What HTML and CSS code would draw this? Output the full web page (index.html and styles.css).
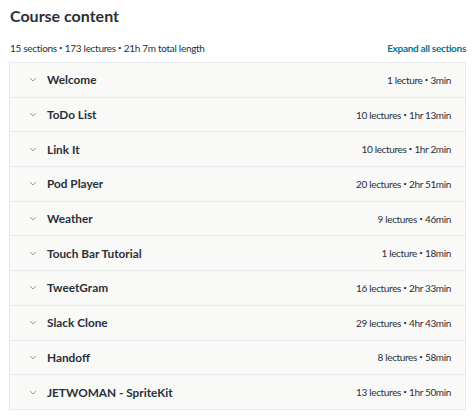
FILE: index.html
```html
<!DOCTYPE html>
<html>
<head>
<meta charset="utf-8">
<link rel="stylesheet" href="styles.css">
</head>
<body>
<div class="page">
  <h2 class="title">Course content</h2>
  <div class="meta">
    <span class="stats">15 sections <span class="dot">•</span> 173 lectures <span class="dot">•</span> 21h 7m total length</span>
    <span class="expand">Expand all sections</span>
  </div>
  <div class="list">
    <div class="row"><span class="chev"><svg width="8" height="5" viewBox="0 0 8 5"><path d="M1 1 L4 4 L7 1" fill="none" stroke="#9a9da1" stroke-width="1"/></svg></span><span class="name">Welcome</span><span class="info">1 lecture <span class="dot">•</span> 3min</span></div>
    <div class="row"><span class="chev"><svg width="8" height="5" viewBox="0 0 8 5"><path d="M1 1 L4 4 L7 1" fill="none" stroke="#9a9da1" stroke-width="1"/></svg></span><span class="name">ToDo List</span><span class="info">10 lectures <span class="dot">•</span> 1hr 13min</span></div>
    <div class="row"><span class="chev"><svg width="8" height="5" viewBox="0 0 8 5"><path d="M1 1 L4 4 L7 1" fill="none" stroke="#9a9da1" stroke-width="1"/></svg></span><span class="name">Link It</span><span class="info">10 lectures <span class="dot">•</span> 1hr 2min</span></div>
    <div class="row"><span class="chev"><svg width="8" height="5" viewBox="0 0 8 5"><path d="M1 1 L4 4 L7 1" fill="none" stroke="#9a9da1" stroke-width="1"/></svg></span><span class="name">Pod Player</span><span class="info">20 lectures <span class="dot">•</span> 2hr 51min</span></div>
    <div class="row"><span class="chev"><svg width="8" height="5" viewBox="0 0 8 5"><path d="M1 1 L4 4 L7 1" fill="none" stroke="#9a9da1" stroke-width="1"/></svg></span><span class="name">Weather</span><span class="info">9 lectures <span class="dot">•</span> 46min</span></div>
    <div class="row"><span class="chev"><svg width="8" height="5" viewBox="0 0 8 5"><path d="M1 1 L4 4 L7 1" fill="none" stroke="#9a9da1" stroke-width="1"/></svg></span><span class="name">Touch Bar Tutorial</span><span class="info">1 lecture <span class="dot">•</span> 18min</span></div>
    <div class="row"><span class="chev"><svg width="8" height="5" viewBox="0 0 8 5"><path d="M1 1 L4 4 L7 1" fill="none" stroke="#9a9da1" stroke-width="1"/></svg></span><span class="name">TweetGram</span><span class="info">16 lectures <span class="dot">•</span> 2hr 33min</span></div>
    <div class="row"><span class="chev"><svg width="8" height="5" viewBox="0 0 8 5"><path d="M1 1 L4 4 L7 1" fill="none" stroke="#9a9da1" stroke-width="1"/></svg></span><span class="name">Slack Clone</span><span class="info">29 lectures <span class="dot">•</span> 4hr 43min</span></div>
    <div class="row"><span class="chev"><svg width="8" height="5" viewBox="0 0 8 5"><path d="M1 1 L4 4 L7 1" fill="none" stroke="#9a9da1" stroke-width="1"/></svg></span><span class="name">Handoff</span><span class="info">8 lectures <span class="dot">•</span> 58min</span></div>
    <div class="row"><span class="chev"><svg width="8" height="5" viewBox="0 0 8 5"><path d="M1 1 L4 4 L7 1" fill="none" stroke="#9a9da1" stroke-width="1"/></svg></span><span class="name">JETWOMAN - SpriteKit</span><span class="info">13 lectures <span class="dot">•</span> 1hr 50min</span></div>
  </div>
</div>
</body>
</html>
```
FILE: styles.css
```css
html, body {
  margin: 0;
  padding: 0;
  background: #ffffff;
}
body {
  font-family: "Lato", "Noto Sans", sans-serif;
  color: #29303b;
}
.page {
  padding: 5px 8px 0 9px;
}
.title {
  margin: 0 0 0 1px;
  font-size: 16px;
  font-weight: 700;
  line-height: 22px;
  color: #29303b;
}
.meta {
  display: flex;
  justify-content: space-between;
  align-items: center;
  margin-top: 15px;
  padding: 0 0 0 1px;
  height: 12px;
  font-size: 10px;
}
.stats {
  color: #29303b;
  letter-spacing: -0.3px;
}
.dot {
  font-size: 6px;
  vertical-align: 2px;
  letter-spacing: 0;
}
.expand {
  color: #007791;
  font-weight: 700;
  letter-spacing: -0.3px;
}
.list {
  margin-top: 8px;
  border: 1px solid #e8e9eb;
  width: 455px;
}
.row {
  display: flex;
  align-items: center;
  height: 33.7px;
  background: #f9f9f7;
  border-bottom: 1px solid #e8e9eb;
  padding: 0 14px 0 19px;
}
.row:last-child {
  border-bottom: none;
}
.chev {
  display: flex;
  width: 18px;
}
.name {
  flex: 1;
  font-size: 11.8px;
  font-weight: 700;
  color: #29303b;
}
.info {
  font-size: 10px;
  letter-spacing: -0.35px;
  color: #29303b;
}
```
